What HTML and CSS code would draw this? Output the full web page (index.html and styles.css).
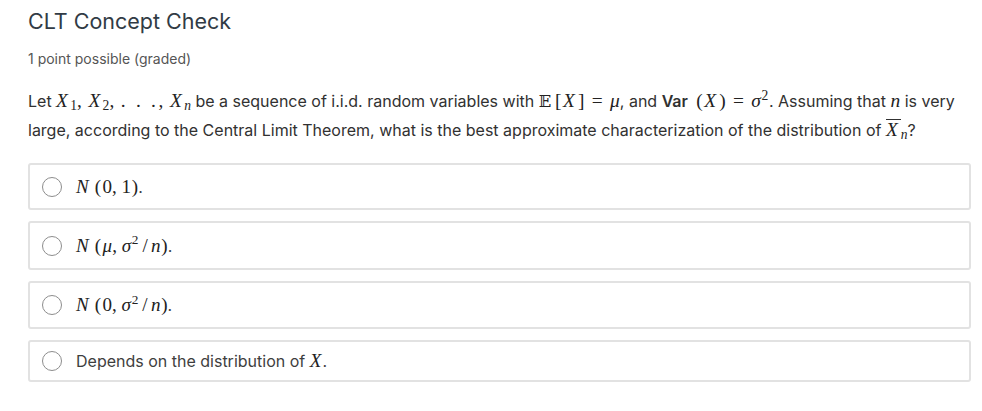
FILE: index.html
```html
<!DOCTYPE html>
<html>
<head>
<meta charset="utf-8">
<link rel="stylesheet" href="styles.css">
</head>
<body>
<div class="problem">
  <h2 class="title">CLT Concept Check</h2>
  <div class="meta">1 point possible (graded)</div>
  <p class="question">Let <span class="m"><i class="x">X</i><sub>1</sub><span class="p">,</span><i class="x">X</i><sub>2</sub><span class="p">,</span><span class="dots">. . .</span><span class="p">,</span><i class="x">X</i><sub><i>n</i></sub></span> be a sequence of i.i.d. random variables with <span class="m"><span class="bb">𝔼</span><span class="lb">[</span><i class="x">X</i><span class="rb">]</span><span class="rel">=</span><i>μ</i></span>, and <b>Var</b> <span class="m"><span class="lb">(</span><i class="x">X</i><span class="rb">)</span><span class="rel">=</span><i>σ</i><sup>2</sup></span>. Assuming that <span class="m"><i>n</i></span> is very large, according to the Central Limit Theorem, what is the best approximate characterization of the distribution of <span class="m"><span class="ovl"><i class="x">X</i></span><sub><i>n</i></sub></span>?</p>
  <div class="options">
    <label class="opt h47"><span class="radio"></span><span class="txt"><span class="m"><i class="x">N</i><span class="lb sp">(</span>0<span class="p">,</span>1<span class="rb">)</span></span>.</span></label>
    <label class="opt h49"><span class="radio"></span><span class="txt"><span class="m"><i class="x">N</i><span class="lb sp">(</span><i>μ</i><span class="p">,</span><i>σ</i><sup>2</sup><span class="sl">/</span><i>n</i><span class="rb">)</span></span>.</span></label>
    <label class="opt h48"><span class="radio"></span><span class="txt"><span class="m"><i class="x">N</i><span class="lb sp">(</span>0<span class="p">,</span><i>σ</i><sup>2</sup><span class="sl">/</span><i>n</i><span class="rb">)</span></span>.</span></label>
    <label class="opt h42"><span class="radio"></span><span class="txt">Depends on the distribution of <span class="m"><i class="x end">X</i></span>.</span></label>
  </div>
</div>
</body>
</html>
```
FILE: styles.css
```css
html, body {
  margin: 0;
  padding: 0;
  background: #fff;
}
body {
  font-family: Inter, "Noto Sans", sans-serif;
  color: #313131;
}
.problem {
  padding: 8px 11px 0 28px;
}
.title {
  margin: 0;
  font-size: 21.5px;
  font-weight: 400;
  line-height: 26px;
  color: #313b45;
}
.meta {
  margin-top: 16px;
  font-size: 14px;
  line-height: 18px;
  color: #555;
}
.question {
  margin: 19px 0 0 0;
  font-size: 16px;
  line-height: 28px;
  color: #313131;
}
.question b {
  font-weight: 600;
}
.m {
  font-family: "Liberation Serif", "DejaVu Serif", serif;
  font-size: 1.21em;
  white-space: nowrap;
  color: #222;
}
.m i {
  font-style: italic;
}
.m i.x {
  margin-right: 0.12em;
}
.m i.x.end {
  margin-right: 0.06em;
}
.m sub, .m sup {
  font-size: 0.7em;
  line-height: 0;
}
.m sub {
  vertical-align: -0.25em;
}
.m sup {
  vertical-align: 0.55em;
  margin-left: 0.05em;
  margin-right: 0.05em;
}
.p {
  margin-right: 0.34em;
}
.dots {
  letter-spacing: 0.14em;
}
.rel {
  margin: 0 0.38em;
}
.lb {
  margin-left: 0.2em;
  margin-right: 0.08em;
}
.rb {
  margin-left: 0.04em;
}
.sl {
  margin: 0 0.18em;
}
.bb {
  font-family: "DejaVu Serif", serif;
  font-size: 0.85em;
}
.ovl {
  display: inline-block;
  border-top: 1px solid #313131;
  line-height: 0.85;
  padding-top: 2px;
}
.ovl i.x {
  margin-right: 0.15em;
}
.options {
  margin-top: 19px;
  display: flex;
  flex-direction: column;
  gap: 11px;
}
.opt {
  display: flex;
  align-items: center;
  gap: 14px;
  box-sizing: border-box;
  padding: 0 12px 0 12px;
  border: 2px solid #e2e2e2;
  border-radius: 3px;
  font-size: 16px;
  color: #3e3e3e;
}
.h47 { height: 47px; }
.h48 { height: 48px; }
.h49 { height: 49px; }
.h42 { height: 42px; }
.opt .m {
  font-size: 19px;
}
.opt .m .p {
  margin-right: 0.25em;
}
.radio {
  width: 20px;
  height: 20px;
  border: 1px solid #8d8d8d;
  border-radius: 50%;
  box-sizing: border-box;
  flex: none;
}
```
